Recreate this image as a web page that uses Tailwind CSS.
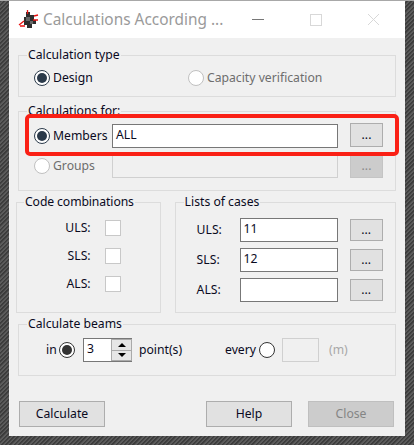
<!DOCTYPE html>
<html lang="en">
<head>
  <meta charset="UTF-8">
  <title>Calculations According ...</title>
  <script src="https://cdn.jsdelivr.net/npm/@tailwindcss/browser@4"></script>
</head>
<body class="w-[414px] h-[445px] overflow-hidden bg-[#4a4a4a] bg-[repeating-linear-gradient(135deg,#3c3c3c_0px,#3c3c3c_1px,#5c5c5c_2px,#5c5c5c_3px)] font-['Noto_Sans',sans-serif] text-[12.2px] leading-[18px] text-[#0a0a1e]">
  <div class="h-px bg-[#a8a8a8]"></div>
  <div class="relative ml-[9px] w-[396px] h-[435px] bg-[#f0f0f0]">
    <!-- Title bar -->
    <header class="flex items-center h-[37px] bg-white">
      <svg class="ml-[9px] w-[21px] h-[21px]" viewBox="0 0 21 21">
        <path d="M8 3h4v3h4v5h2v4h-4v4H9v-3H6V8h2z" fill="#2e2e2e"/>
        <path d="M8 8h4v4H8zM12 12h3v3h-3z" fill="#666"/>
        <path d="M9.5 1v4M16 7l4-1M15 11h5M1 16l5-4M2 17h5" stroke="#e81010" stroke-width="1.3" fill="none"/>
      </svg>
      <span class="ml-[4px] text-[15.4px] text-[#9a9a9a]">Calculations According ...</span>
      <svg class="absolute left-[243px] top-[11px] w-[154px] h-[16px]" viewBox="0 0 154 16" fill="none" stroke-width="1">
        <path d="M0 7.5h12" stroke="#777"/>
        <rect x="58.5" y="2.5" width="11" height="11" stroke="#d8d8d8"/>
        <path d="M116 2l11 11M127 2l-11 11" stroke="#d8d8d8"/>
      </svg>
    </header>

    <div class="px-[9px]">
      <!-- Calculation type -->
      <fieldset class="mt-[9px] h-[50px] border border-[#dcdcdc]">
        <legend class="ml-[8px] px-px leading-[16px]">Calculation type</legend>
        <div class="flex items-center mt-[6px] pl-[15px]">
          <span class="flex items-center justify-center w-4 h-4 rounded-full border border-[#2b3a4a] bg-white"><span class="w-[10px] h-[10px] rounded-full bg-[#2b3a4a]"></span></span>
          <span class="ml-[3px] w-[135px]">Design</span>
          <span class="w-4 h-4 rounded-full border border-[#c0c0c0] bg-white"></span>
          <span class="ml-[3px] text-[#6d6d6d]">Capacity verification</span>
        </div>
      </fieldset>

      <!-- Calculations for -->
      <fieldset class="mt-[6px] h-[88px] border border-[#dcdcdc]">
        <legend class="ml-[8px] px-px leading-[16px]">Calculations for:</legend>
        <div class="flex items-center mt-[5px] h-[24px] pl-[15px]">
          <span class="flex items-center justify-center w-4 h-4 rounded-full border border-[#2b3a4a] bg-white"><span class="w-[10px] h-[10px] rounded-full bg-[#2b3a4a]"></span></span>
          <span class="ml-[3px] w-[59px]">Members</span>
          <div class="w-[226px] h-[24px] border border-[#777] bg-white pl-[3px] leading-[20px]">ALL</div>
          <button class="ml-[12px] -mt-[2px] w-[33px] h-[24px] border border-[#adadad] bg-[#e1e1e1] leading-[18px]">...</button>
        </div>
        <div class="flex items-center mt-[6px] h-[24px] pl-[15px]">
          <span class="w-4 h-4 rounded-full border border-[#c0c0c0] bg-white"></span>
          <span class="ml-[3px] w-[59px] text-[#6d6d6d]">Groups</span>
          <div class="w-[226px] h-[24px] border border-[#d0d0d0] bg-[#f0f0f0]"></div>
          <button class="ml-[12px] w-[33px] h-[24px] border border-[#c4c4c4] bg-[#cccccc] text-[#8a8a8a] leading-[18px]">...</button>
        </div>
      </fieldset>

      <!-- Two columns -->
      <div class="flex mt-[3px] -ml-[2px] h-[119px]">
        <fieldset class="w-[145px] border border-[#dcdcdc]">
          <legend class="ml-[7px] px-[1px] leading-[16px] tracking-[-0.1px]">Code combinations</legend>
          <div class="flex flex-col items-end pr-[39px] gap-[12px] mt-[10px]">
            <div class="flex items-center h-4">ULS:<span class="ml-[14px] w-4 h-4 border border-[#c8c8c8] bg-white"></span></div>
            <div class="flex items-center h-4">SLS:<span class="ml-[14px] w-4 h-4 border border-[#c8c8c8] bg-white"></span></div>
            <div class="flex items-center h-4">ALS:<span class="ml-[14px] w-4 h-4 border border-[#c8c8c8] bg-white"></span></div>
          </div>
        </fieldset>
        <fieldset class="ml-[14px] w-[222px] border border-[#dcdcdc]">
          <legend class="ml-[8px] px-[1px] leading-[16px]">Lists of cases</legend>
          <div class="flex flex-col gap-[6px] mt-[8px] pl-[21px]">
            <div class="flex items-center"><span class="w-[43px]">ULS:</span><div class="w-[98px] h-6 border border-[#777] bg-white pl-[3px] leading-[20px]">11</div><button class="ml-[12px] w-[33px] h-[22px] border border-[#adadad] bg-[#e1e1e1]">...</button></div>
            <div class="flex items-center"><span class="w-[43px]">SLS:</span><div class="w-[98px] h-6 border border-[#777] bg-white pl-[3px] leading-[20px]">12</div><button class="ml-[12px] w-[33px] h-[22px] border border-[#adadad] bg-[#e1e1e1]">...</button></div>
            <div class="flex items-center"><span class="w-[43px]">ALS:</span><div class="w-[98px] h-6 border border-[#777] bg-white"></div><button class="ml-[12px] w-[33px] h-[22px] border border-[#adadad] bg-[#e1e1e1]">...</button></div>
          </div>
        </fieldset>
      </div>

      <!-- Calculate beams -->
      <fieldset class="mt-[3px] h-[60px] border border-[#dcdcdc]">
        <legend class="ml-[8px] px-px leading-[16px]">Calculate beams</legend>
        <div class="flex items-center mt-[6px] h-[24px]">
          <span class="ml-[27px] w-[13px]">in</span>
          <span class="flex items-center justify-center w-4 h-4 rounded-full border border-[#333] bg-white"><span class="w-[10px] h-[10px] rounded-full bg-[#333]"></span></span>
          <div class="flex ml-[8px] w-[49px] h-[24px] border-y border-l border-[#777] bg-white">
            <span class="flex-1 pl-[3px] leading-[20px]">3</span>
            <div class="flex flex-col gap-px w-[21px] p-px bg-[#aaa]">
              <span class="flex-1 flex items-center justify-center bg-[#e6e6e6]"><span class="w-0 h-0 border-x-[4px] border-x-transparent border-b-[4px] border-b-black"></span></span>
              <span class="flex-1 flex items-center justify-center bg-[#e6e6e6]"><span class="w-0 h-0 border-x-[4px] border-x-transparent border-t-[4px] border-t-black"></span></span>
            </div>
          </div>
          <span class="ml-[7px] w-[86px]">point(s)</span>
          <span class="w-[34px]">every</span>
          <span class="w-4 h-4 rounded-full border border-[#333] bg-white"></span>
          <div class="ml-[7px] w-[37px] h-[24px] border border-[#d0d0d0] bg-[#f0f0f0]"></div>
          <span class="ml-[10px] text-[#a8a8a8]">(m)</span>
        </div>
      </fieldset>

      <!-- Buttons -->
      <div class="flex mt-[25px] ml-px">
        <button class="w-[86px] h-[26px] border border-[#adadad] bg-[#e1e1e1]">Calculate</button>
        <button class="ml-[101px] w-[86px] h-[26px] border border-[#adadad] bg-[#e1e1e1]">Help</button>
        <button class="ml-[16px] w-[86px] h-[26px] border border-[#bfbfbf] bg-[#cccccc] text-[#858585]">Close</button>
      </div>
    </div>

    <!-- Red highlight -->
    <div class="absolute left-[16px] top-[113px] w-[374px] h-[42px] border-[4px] border-[#fa2015] rounded-[5px]"></div>
  </div>
</body>
</html>
